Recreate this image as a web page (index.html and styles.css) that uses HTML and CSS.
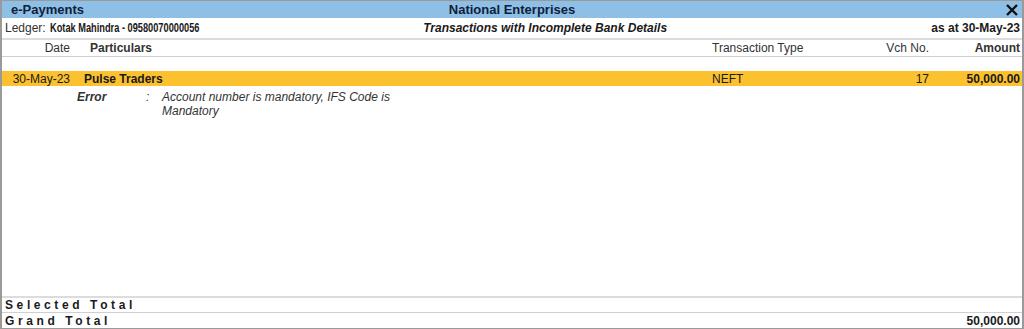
FILE: index.html
```html
<!DOCTYPE html>
<html lang="en">
  <head>
    <meta charset="UTF-8" />
    <meta name="viewport" content="width=device-width, initial-scale=1.0" />
    <title>e-Payments - National Enterprises</title>
    <link rel="stylesheet" href="styles.css">
  </head>
  <body>
    <div class="window">
      <div class="title-bar">
        <span class="title-left">e-Payments</span>
        <span class="title-center">National Enterprises</span>
        <span class="close-btn">
          <svg width="14" height="14" viewBox="0 0 14 14">
            <path d="M2 2 L12 12 M12 2 L2 12" stroke="#111" stroke-width="2.4" />
          </svg>
        </span>
      </div>

      <div class="info-row">
        <div class="ledger">
          <span class="ledger-label">Ledger:</span>
          <span class="ledger-name">Kotak Mahindra - 09580070000056</span>
        </div>
        <div class="report-title">Transactions with Incomplete Bank Details</div>
        <div class="as-at">as at 30-May-23</div>
      </div>

      <div class="head-row">
        <span class="col-date">Date</span>
        <span class="col-part bold">Particulars</span>
        <span class="col-type">Transaction Type</span>
        <span class="col-vch">Vch No.</span>
        <span class="col-amt bold">Amount</span>
      </div>

      <div class="list">
        <div class="entry selected">
          <span class="col-date">30-May-23</span>
          <span class="col-part bold">Pulse Traders</span>
          <span class="col-type">NEFT</span>
          <span class="col-vch">17</span>
          <span class="col-amt bold">50,000.00</span>
        </div>
        <div class="error-row">
          <span class="error-label">Error</span>
          <span class="error-colon">:</span>
          <span class="error-text">Account number is mandatory, IFS Code is Mandatory</span>
        </div>
      </div>

      <div class="total-row top-line">
        <span class="total-label">Selected Total</span>
        <span class="total-amt"></span>
      </div>
      <div class="total-row">
        <span class="total-label">Grand Total</span>
        <span class="total-amt">50,000.00</span>
      </div>
    </div>
  </body>
</html>
```

FILE: styles.css
```css
* {
  margin: 0;
  padding: 0;
  box-sizing: border-box;
  font-family: "Liberation Sans", Arial, sans-serif;
}

body {
  background-color: #ffffff;
  color: #1a1a1a;
  font-size: 12px;
}

.window {
  height: 329px;
  display: flex;
  flex-direction: column;
  border: 1px solid #9a9a9a;
  border-left-width: 2px;
  border-right-width: 2px;
}

.bold {
  font-weight: bold;
}

.title-bar {
  height: 17px;
  background-color: #8dbfe7;
  display: flex;
  align-items: center;
  position: relative;
  padding: 0 2px 0 9px;
  font-size: 13px;
  font-weight: bold;
  color: #10203a;
}

.title-left {
  flex: 1;
}

.title-center {
  position: absolute;
  left: 0;
  right: 0;
  text-align: center;
  pointer-events: none;
}

.close-btn {
  display: flex;
  align-items: center;
  margin-right: 1px;
}

.info-row {
  height: 22px;
  display: flex;
  align-items: center;
  padding: 0 2px 0 3px;
  border-bottom: 2px solid #dcdcdc;
}

.ledger {
  width: 330px;
  display: flex;
  align-items: center;
}

.ledger-label {
  color: #333;
  width: 45px;
}

.ledger-name {
  display: inline-block;
  font-weight: bold;
  font-size: 12px;
  white-space: nowrap;
  transform: scaleX(0.77);
  transform-origin: left center;
}

.report-title {
  flex: 1;
  text-align: center;
  font-weight: bold;
  font-style: italic;
  padding-right: 176px;
}

.as-at {
  font-weight: bold;
}

.head-row,
.entry {
  display: flex;
  align-items: center;
  padding-right: 2px;
}

.head-row {
  height: 17px;
  border-bottom: 1px solid #cfcfcf;
  color: #333;
}

.col-date {
  width: 68px;
  text-align: right;
}

.col-part {
  width: 642px;
  padding-left: 14px;
}

.head-row .col-part {
  padding-left: 20px;
}

.col-type {
  width: 142px;
}

.col-vch {
  width: 75px;
  text-align: right;
}

.col-amt {
  flex: 1;
  text-align: right;
}

.list {
  flex: 1;
  padding-top: 14px;
}

.entry {
  height: 15px;
}

.entry.selected {
  background-color: #fcc12f;
}

.error-row {
  display: flex;
  padding-top: 4px;
  font-style: italic;
  line-height: 14px;
  color: #333;
}

.error-label {
  width: 69px;
  padding-left: 75px;
  box-sizing: content-box;
  font-weight: bold;
}

.error-colon {
  width: 16px;
}

.error-text {
  width: 232px;
}

.total-row {
  height: 16px;
  display: flex;
  align-items: center;
  justify-content: space-between;
  padding: 0 2px 0 3px;
  border-top: 1px solid #cfcfcf;
  font-weight: bold;
  font-size: 12px;
}

.total-row.top-line {
  border-top: 2px solid #dcdcdc;
}

.total-label {
  letter-spacing: 3.6px;
}
```
